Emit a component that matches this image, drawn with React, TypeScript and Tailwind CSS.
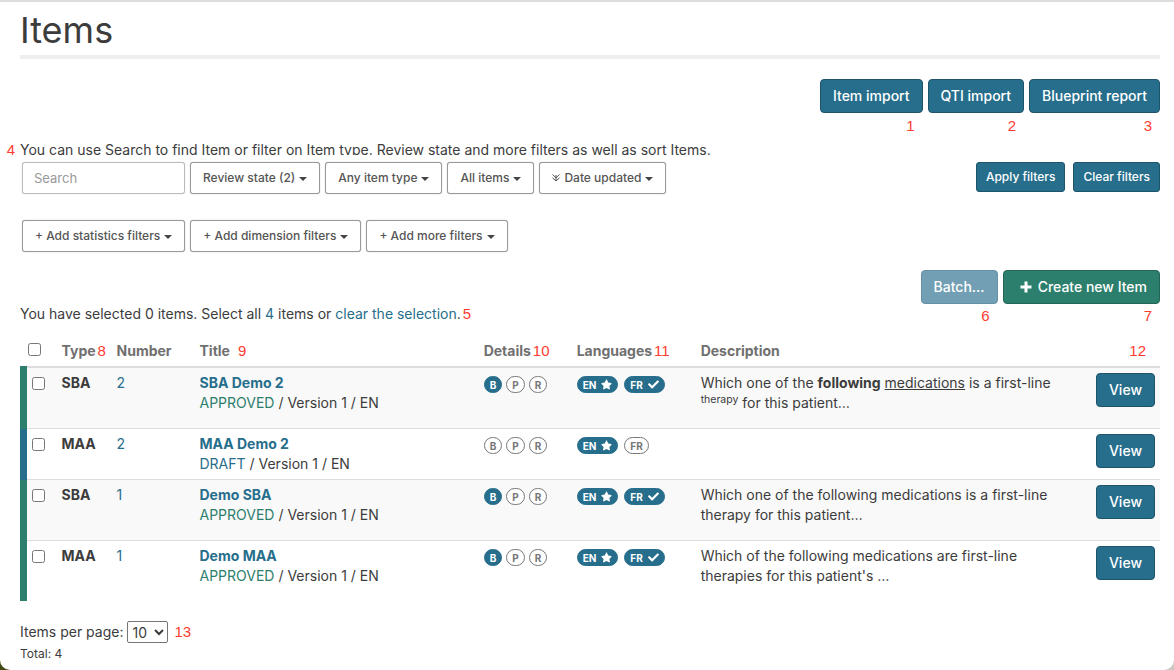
import React from 'react';
import clsx from 'clsx';
import { FaCheck, FaStar } from 'react-icons/fa';

type Item = {
  id: number;
  type: string;
  number: number;
  title: string;
  status: 'APPROVED' | 'DRAFT';
  blueprint: boolean;
  frenchDone: boolean;
  description: React.ReactNode;
};

const items: Item[] = [
  {
    id: 1,
    type: 'SBA',
    number: 2,
    title: 'SBA Demo 2',
    status: 'APPROVED',
    blueprint: true,
    frenchDone: true,
    description: (
      <>
        Which one of the <b>following</b> <u>medications</u> is a first-line <sup>therapy</sup> for this patient…
      </>
    ),
  },
  {
    id: 2,
    type: 'MAA',
    number: 2,
    title: 'MAA Demo 2',
    status: 'DRAFT',
    blueprint: false,
    frenchDone: false,
    description: null,
  },
  {
    id: 3,
    type: 'SBA',
    number: 1,
    title: 'Demo SBA',
    status: 'APPROVED',
    blueprint: true,
    frenchDone: true,
    description: 'Which one of the following medications is a first-line therapy for this patient…',
  },
  {
    id: 4,
    type: 'MAA',
    number: 1,
    title: 'Demo MAA',
    status: 'APPROVED',
    blueprint: true,
    frenchDone: true,
    description: "Which of the following medications are first-line therapies for this patient's …",
  },
];

function Note({ children, className }: { children: React.ReactNode; className?: string }) {
  return (
    <span className={clsx("font-['Liberation_Sans',sans-serif] text-[15px] leading-5 font-normal text-[#ff3b30]", className)}>
      {children}
    </span>
  );
}

function Button({ children, className }: { children: React.ReactNode; className?: string }) {
  return (
    <button
      type="button"
      className={clsx(
        'h-[34px] rounded-[4px] border px-3 text-sm font-medium whitespace-nowrap text-white',
        className ?? 'border-[#1d5469] bg-[#266e8c]'
      )}
    >
      {children}
    </button>
  );
}

function SmallButton({ children }: { children: React.ReactNode }) {
  return (
    <button
      type="button"
      className="h-[30px] rounded-[3px] border border-[#1d5469] bg-[#266e8c] px-[9px] text-xs font-medium whitespace-nowrap text-white"
    >
      {children}
    </button>
  );
}

function FilterButton({ children }: { children: React.ReactNode }) {
  return (
    <button
      type="button"
      className="flex h-8 items-center gap-1 rounded-[3px] border border-[#999] bg-white px-3 text-xs font-medium whitespace-nowrap text-[#555] shadow-[0_0_1px_#999]"
    >
      {children}
      <svg className="mt-[2px] h-1 w-2" viewBox="0 0 8 4" aria-hidden="true">
        <path d="M0 0h8L4 4z" fill="#444" />
      </svg>
    </button>
  );
}

function Pill({ filled, children }: { filled?: boolean; children: React.ReactNode }) {
  return (
    <span
      className={clsx(
        'inline-flex h-[17px] min-w-[18px] items-center justify-center gap-[5px] rounded-full border px-[5px] text-[10px] leading-none font-bold',
        filled ? 'border-[#266e8c] bg-[#266e8c] text-white' : 'border-[#777] bg-white text-[#777]'
      )}
    >
      {children}
    </span>
  );
}

function ItemRow({ item }: { item: Item }) {
  const approved = item.status === 'APPROVED';
  return (
    <tr className="border-t border-[#ddd] align-top first:border-t-2 odd:bg-[#f9f9f9]">
      <td className={clsx('border-l-[7px] p-[5px]', approved ? 'border-l-[#2c7f6c]' : 'border-l-[#266e8c]')}>
        <input type="checkbox" aria-label={`Select ${item.title}`} className="mt-1 block size-[13px]" />
      </td>
      <td className="p-[5px] font-bold">{item.type}</td>
      <td className="p-[5px]">
        <a href="#" className="text-[#266e8c]">{item.number}</a>
      </td>
      <td className="p-[5px]">
        <a href="#" className="font-bold text-[#266e8c]">{item.title}</a>
        <p className={approved ? 'mb-[10px]' : ''}>
          <span className={approved ? 'text-[#2c7f6c]' : 'text-[#266e8c]'}>{item.status}</span> / Version 1 / EN
        </p>
      </td>
      <td className="p-[5px]">
        <div className="flex gap-1 pt-[3px]">
          <Pill filled={item.blueprint}>B</Pill>
          <Pill>P</Pill>
          <Pill>R</Pill>
        </div>
      </td>
      <td className="p-[5px]">
        <div className="flex gap-[6px] pt-[3px]">
          <Pill filled>
            EN <FaStar className="size-[11px]" />
          </Pill>
          <Pill filled={item.frenchDone}>
            FR {item.frenchDone && <FaCheck className="size-[11px]" />}
          </Pill>
        </div>
      </td>
      <td className="p-[5px]">{item.description}</td>
      <td className="p-[5px] text-right">
        <Button>View</Button>
      </td>
    </tr>
  );
}

function App() {
  return (
    <div className="min-h-screen bg-linear-to-r from-[#3f4a10] to-[#c9c7c2]">
      <div className="min-h-screen rounded-b-[10px] border-t-2 border-[#ddd] bg-white pr-[14px] pl-5 font-[Inter,sans-serif] text-sm leading-5 text-[#3c3c3c]">
        <h1 className="border-b-4 border-[#eee] pt-2 pb-[5px] text-4xl">Items</h1>

        <div className="mt-5 flex justify-end gap-[5px]">
          {['Item import', 'QTI import', 'Blueprint report'].map((label, i) => (
            <div key={label} className="flex flex-col">
              <Button>{label}</Button>
              <Note className="mt-[3px] self-end pr-2">{i + 1}</Note>
            </div>
          ))}
        </div>

        <div className="relative mt-1">
          <Note className="absolute right-full mr-[5px]">4</Note>
          <p className="h-[15px] overflow-hidden">
            You can use Search to find Item or filter on Item type. Review state and more filters as well as sort Items.
          </p>
        </div>

        <div className="mt-[7px] flex items-start gap-2">
          <div className="mr-auto flex flex-wrap gap-[5px] pl-[2px]">
            <input
              type="text"
              aria-label="Search"
              placeholder="Search"
              className="h-8 w-[163px] rounded-[3px] border border-[#bbb] bg-white px-[11px] text-[13px] shadow-[0_0_1px_#bbb] placeholder:text-[#999]"
            />
            <FilterButton>Review state (2)</FilterButton>
            <FilterButton>Any item type</FilterButton>
            <FilterButton>All items</FilterButton>
            <FilterButton>
              <svg className="size-2" viewBox="0 0 8 8" fill="none" stroke="#555" aria-hidden="true">
                <path d="M0.5 0.5L4 3.8l3.5-3.3M0.5 3.8L4 7l3.5-3.2M4 1v5" />
              </svg>
              Date updated
            </FilterButton>
          </div>
          <SmallButton>Apply filters</SmallButton>
          <SmallButton>Clear filters</SmallButton>
        </div>

        <div className="mt-[26px] flex gap-[5px] pl-[2px]">
          <FilterButton>+ Add statistics filters</FilterButton>
          <FilterButton>+ Add dimension filters</FilterButton>
          <FilterButton>+ Add more filters</FilterButton>
        </div>

        <div className="mt-[18px] flex items-end justify-between">
          <p className="pb-[2px]">
            You have selected 0 items. Select all <a href="#" className="text-[#266e8c]">4</a> items or{' '}
            <a href="#" className="text-[#266e8c]">clear the selection</a>.<Note className="ml-[2px]">5</Note>
          </p>
          <div className="flex gap-[5px]">
            <div className="flex flex-col">
              <Button className="border-[#6690a3] bg-[#729fb4]">Batch…</Button>
              <Note className="self-end pt-[2px] pr-2">6</Note>
            </div>
            <div className="flex flex-col">
              <Button className="border-[#246655] bg-[#2c7f6c]">
                <span className="flex items-center gap-[6px] pl-1">
                  <svg className="size-3" viewBox="0 0 12 12" aria-hidden="true">
                    <path d="M4.5 0.5h3v4h4v3h-4v4h-3v-4h-4v-3h4z" fill="#fff" />
                  </svg>
                  Create new Item
                </span>
              </Button>
              <Note className="self-end pt-[2px] pr-2">7</Note>
            </div>
          </div>
        </div>

        <table className="mt-[10px] w-full table-fixed border-collapse">
          <colgroup>
            <col className="w-[33px]" />
            <col className="w-[55px]" />
            <col className="w-[83px]" />
            <col className="w-1/4" />
            <col className="w-[93px]" />
            <col className="w-[124px]" />
            <col />
            <col className="w-[90px]" />
          </colgroup>
          <thead>
            <tr className="text-left whitespace-nowrap text-[#707070]">
              <th className="py-[5px] pl-1">
                <input type="checkbox" aria-label="Select all items" className="mb-1 block size-[13px]" />
              </th>
              <th className="p-[5px]">Type<Note className="ml-[2px]">8</Note></th>
              <th className="p-[5px]">Number</th>
              <th className="p-[5px]">Title<Note className="ml-2">9</Note></th>
              <th className="p-[5px]">Details<Note className="ml-[2px]">10</Note></th>
              <th className="p-[5px]">Languages<Note className="ml-[2px]">11</Note></th>
              <th className="p-[5px]">Description</th>
              <th className="p-[5px] pr-[14px] text-right"><Note>12</Note></th>
            </tr>
          </thead>
          <tbody>
            {items.map((item) => (
              <ItemRow key={item.id} item={item} />
            ))}
          </tbody>
        </table>

        <div className="mt-5 flex items-center">
          <label htmlFor="per-page">Items per page:</label>
          <select id="per-page" defaultValue="10" className="ml-1 h-[22px] w-[41px] rounded-[2px] border border-[#767676] bg-white">
            <option>10</option>
            <option>25</option>
            <option>50</option>
          </select>
          <Note className="ml-[6px]">13</Note>
        </div>
        <p className="mt-px text-xs leading-5">Total: 4</p>
      </div>
    </div>
  );
}

export default App;
